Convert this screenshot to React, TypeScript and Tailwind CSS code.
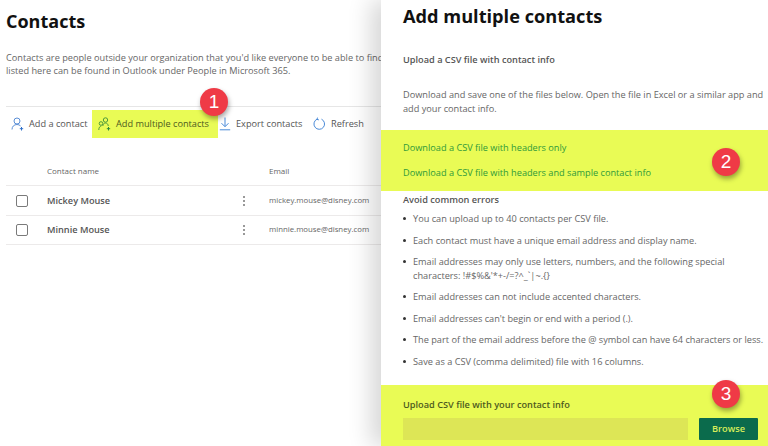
const font = { fontFamily: '"Open Sans", "Noto Sans", sans-serif' };

function PersonAdd() {
  return (
    <svg width="13" height="14" viewBox="0 0 13 14" fill="none" stroke="#5b8fd6" strokeWidth="1">
      <circle cx="6" cy="4" r="3" />
      <path d="M1 12.5c0-3 2-5 5-5 1.500 0 2.700.5 3.500 1.400" />
      <path d="M10.500 10v3.500M8.800 11.700h3.400" stroke="#2f6fc9" />
    </svg>
  );
}

function PeopleAdd() {
  return (
    <svg width="13" height="14" viewBox="0 0 13 14" fill="none" stroke="#4f9a3c" strokeWidth="1">
      <circle cx="7.500" cy="3" r="2.200" />
      <circle cx="3" cy="6.500" r="1.800" />
      <path d="M.8 13c0-2.500 1-3.800 2.400-3.800M4.800 9c.3-2 1.300-3 2.700-3 1.500 0 2.500 1 2.800 3" />
      <path d="M10.500 10v3.500M8.800 11.700h3.400" stroke="#2e8a3a" />
    </svg>
  );
}

function ExportIcon() {
  return (
    <svg width="12" height="14" viewBox="0 0 12 14" fill="none" stroke="#4a8ad8" strokeWidth="1">
      <path d="M6 .5v9M2.500 6.200 6 9.700l3.500-3.500M.8 12.800h10.400" />
    </svg>
  );
}

function RefreshIcon() {
  return (
    <svg width="13" height="14" viewBox="0 0 13 14" fill="none" stroke="#4a8ad8" strokeWidth="1">
      <path d="M8.500 2.200a5.300 5.300 0 1 1-4.500 0" />
      <path d="M4.500.6 4 2.400l1.900.5" />
    </svg>
  );
}

function Badge({ n, className }: { n: number; className: string }) {
  return (
    <div
      className={`absolute flex h-[28px] w-[28px] items-center justify-center rounded-full bg-[#ef3a46] text-[19px] text-white shadow-[1px_3px_5px_rgba(0,0,0,0.35)] ${className}`}
      style={{ fontFamily: '"Liberation Sans", sans-serif' }}
    >
      {n}
    </div>
  );
}

function Row({ name, email }: { name: string; email: string }) {
  return (
    <div className="flex h-[29.500px] items-center border-b border-[#eceaea] pt-[1px]">
      <div className="ml-[10px] h-[12px] w-[12px] rounded-[2px] border border-[#7a7a7a]" />
      <div className="ml-[19px] w-[196px] text-[9.200px] font-semibold text-[#555]">{name}</div>
      <div className="flex w-[26px] flex-col gap-[2px]">
        <span className="h-[2px] w-[2px] rounded-full bg-[#777]" />
        <span className="h-[2px] w-[2px] rounded-full bg-[#777]" />
        <span className="h-[2px] w-[2px] rounded-full bg-[#777]" />
      </div>
      <div className="whitespace-nowrap text-[7.800px] text-[#666]">{email}</div>
    </div>
  );
}

const bullets = [
  'You can upload up to 40 contacts per CSV file.',
  'Each contact must have a unique email address and display name.',
  'Email addresses may only use letters, numbers, and the following special characters: !#$%&\'*+-/=?^_`|~.{}',
  'Email addresses can not include accented characters.',
  "Email addresses can't begin or end with a period (.).",
  'The part of the email address before the @ symbol can have 64 characters or less.',
  'Save as a CSV (comma delimited) file with 16 columns.',
];

export default function App() {
  return (
    <div className="relative flex h-[446px] w-[768px] overflow-hidden bg-white" style={font}>
      {/* Contacts page */}
      <div className="w-[381px] shrink-0 overflow-hidden pl-[6px]">
        <h1 className="mt-[6px] text-[18px] font-bold leading-[30px] text-[#111]">Contacts</h1>
        <p className="mt-[15px] overflow-hidden whitespace-nowrap text-[9.200px] leading-[13px] text-[#666]">
          Contacts are people outside your organization that you'd like everyone to be able to find
          <br />
          listed here can be found in Outlook under People in Microsoft 365.
        </p>
        <div className="mt-[29px] flex h-[34px] items-center border-t border-[#e6e6e6] text-[9.200px] text-[#555]">
          <div className="ml-[5px] flex w-[81px] items-center gap-[5px]">
            <PersonAdd />
            <span>Add a contact</span>
          </div>
          <div className="mt-[1px] flex h-[28px] w-[126px] items-center gap-[5px] bg-[#e9fb55] pl-[6px] text-[#4d5a20]">
            <PeopleAdd />
            <span className="whitespace-nowrap">Add multiple contacts</span>
          </div>
          <div className="ml-[1px] flex w-[94px] items-center gap-[5px]">
            <ExportIcon />
            <span className="whitespace-nowrap">Export contacts</span>
          </div>
          <div className="flex items-center gap-[5px]">
            <RefreshIcon />
            <span>Refresh</span>
          </div>
        </div>
        <div className="mt-[16px] flex h-[30px] items-center border-b border-[#eceaea] text-[8px] text-[#666]">
          <span className="ml-[41px] w-[222px]">Contact name</span>
          <span>Email</span>
        </div>
        <Row name="Mickey Mouse" email="mickey.mouse@disney.com" />
        <Row name="Minnie Mouse" email="minnie.mouse@disney.com" />
      </div>

      {/* Add multiple contacts panel */}
      <div className="z-10 flex h-[446px] flex-1 flex-col bg-white shadow-[-10px_0_22px_rgba(0,0,0,0.16)]">
        <h2 className="ml-[22px] mt-[2px] text-[18.200px] font-bold leading-[28px] text-[#111]">Add multiple contacts</h2>
        <div className="ml-[22px] mt-[23px] text-[9.200px] font-semibold leading-[14px] text-[#555]">
          Upload a CSV file with contact info
        </div>
        <p className="ml-[22px] mt-[21px] whitespace-nowrap text-[9.200px] leading-[14px] text-[#666]">
          Download and save one of the files below. Open the file in Excel or a similar app and
          <br />
          add your contact info.
        </p>
        <div className="mt-[14px] flex h-[61px] flex-col justify-center gap-[11px] bg-[#e9fb55] pl-[22px] text-[9.200px] leading-[14px] text-[#2f9a3a]">
          <span>Download a CSV file with headers only</span>
          <span>Download a CSV file with headers and sample contact info</span>
        </div>
        <div className="ml-[22px] mt-[2px] text-[9.200px] font-semibold leading-[14px] text-[#555]">Avoid common errors</div>
        <ul className="ml-[32px] mt-[5px] flex w-[354px] flex-col gap-[8px] text-[9.200px] leading-[13.500px] text-[#666]">
          {bullets.map((b, i) => (
            <li key={b} className={i === 2 ? 'relative w-[318px]' : 'relative'}>
              <span className="absolute left-[-10px] top-[5px] h-[3px] w-[3px] rounded-full bg-[#333]" />
              {b}
            </li>
          ))}
        </ul>
        <div className="mt-auto h-[61px] bg-[#e9fb55] pl-[22px] pt-[13px]">
          <div className="text-[9.200px] font-semibold leading-[14px] text-[#4d5a20]">
            Upload CSV file with your contact info
          </div>
          <div className="mt-[6px] flex gap-[11px]">
            <div className="h-[22px] w-[285px] bg-[#dde656]" />
            <div className="flex h-[22px] w-[59px] items-center justify-center rounded-[1px] bg-[#0b6b4c] text-[9.200px] font-semibold text-[#d8ee5a]">
              Browse
            </div>
          </div>
        </div>
      </div>

      <Badge n={1} className="left-[200px] top-[88px] z-20" />
      <Badge n={2} className="left-[712px] top-[148px] z-20" />
      <Badge n={3} className="left-[712px] top-[380px] z-20" />
    </div>
  );
}
